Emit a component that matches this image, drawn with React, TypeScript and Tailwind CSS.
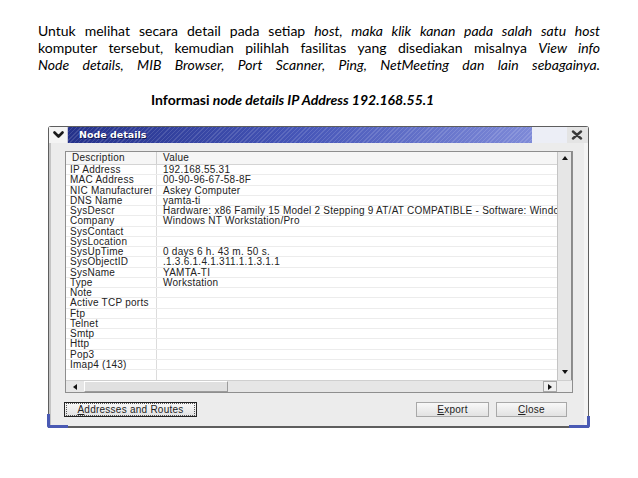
import React from "react";

const rows: [string, string][] = [
  ["IP Address", "192.168.55.31"],
  ["MAC Address", "00-90-96-67-58-8F"],
  ["NIC Manufacturer", "Askey Computer"],
  ["DNS Name", "yamta-ti"],
  ["SysDescr", "Hardware: x86 Family 15 Model 2 Stepping 9 AT/AT COMPATIBLE - Software: Windo"],
  ["Company", "Windows NT Workstation/Pro"],
  ["SysContact", ""],
  ["SysLocation", ""],
  ["SysUpTime", "0 days 6 h. 43 m. 50 s."],
  ["SysObjectID", ".1.3.6.1.4.1.311.1.1.3.1.1"],
  ["SysName", "YAMTA-TI"],
  ["Type", "Workstation"],
  ["Note", ""],
  ["Active TCP ports", ""],
  ["Ftp", ""],
  ["Telnet", ""],
  ["Smtp", ""],
  ["Http", ""],
  ["Pop3", ""],
  ["Imap4 (143)", ""],
];

function Btn({ w, first, rest, def }: { w: string; first: string; rest: string; def?: boolean }) {
  return (
    <div
      className={`${w} h-[15px] flex items-center justify-center bg-[linear-gradient(#f8f8f8,#e2e2e2)] ${
        def ? "border border-[#222]" : "border border-[#a8a8a8]"
      }`}
    >
      <div
        className={`flex items-center justify-center h-full w-full ${
          def ? "border border-dotted border-[#555] m-[1px]" : ""
        } text-[10px] tracking-[0.25px] leading-[10px] text-[#222]`}
      >
        <span className="underline">{first}</span>
        <span>{rest}</span>
      </div>
    </div>
  );
}

export default function App() {
  return (
    <div className="w-[638px] h-[478px] bg-white overflow-hidden relative">
      <div className="pt-[22px] pl-[38px] w-[600px] text-[14px] leading-[17px] text-black font-['Lato',sans-serif]">
        <div className="text-justify [text-align-last:justify] h-[17px]">
          Untuk melihat secara detail pada setiap <i>host, maka klik kanan pada salah satu host</i>
        </div>
        <div className="text-justify [text-align-last:justify] h-[17px]">
          komputer tersebut, kemudian pilihlah fasilitas yang disediakan misalnya <i>View info</i>
        </div>
        <div className="text-justify [text-align-last:justify] h-[17px]">
          <i>Node details, MIB Browser, Port Scanner, Ping, NetMeeting dan lain sebagainya.</i>
        </div>
      </div>
      <div className="mt-[18px] pl-[151px] h-[17px] text-[14px] leading-[17px] font-bold text-black font-['Lato',sans-serif]">
        Informasi <i>node details IP Address 192.168.55.1</i>
      </div>

      {/* Window */}
      <div className="mt-[18px] ml-[48px] w-[541px] h-[302px] border border-[#5e5e5e] border-b-2 rounded-t-[3px] bg-[#ececec] flex flex-col relative font-['Liberation_Sans',sans-serif]">
        {/* title bar */}
        <div className="h-[16px] flex shrink-0">
          <div className="w-[19px] h-full bg-[#f4f4f4] flex items-center justify-center border-r border-[#c8c8d8]">
            <svg width="11" height="8" viewBox="0 0 11 8">
              <polyline points="1.5,1.5 5.5,5.5 9.5,1.5" fill="none" stroke="#1a1a1a" strokeWidth="2.6" strokeLinecap="round" strokeLinejoin="round" />
            </svg>
          </div>
          <div className="w-[464px] h-full flex items-center pl-[11px] [background-image:repeating-linear-gradient(135deg,rgba(255,255,255,0.13)_0px,rgba(255,255,255,0.13)_1px,transparent_1px,transparent_3px),linear-gradient(to_right,#24318a,#4656b8_50%,#7e8ad8)]">
            <span className="text-white font-bold text-[9.5px] leading-[10px] font-['DejaVu_Sans',sans-serif] [text-shadow:1px_1px_0_#101850]">
              Node details
            </span>
          </div>
          <div className="w-[35px] h-full bg-[#eceef6]" />
          <div className="flex-1 h-full bg-[#e4e4e4] flex items-center justify-end pr-[5px]">
            <svg width="12" height="10" viewBox="0 0 12 10">
              <path d="M2 1.5 L10 8.5 M10 1.5 L2 8.5" stroke="#3a3a3a" strokeWidth="2.4" strokeLinecap="round" />
            </svg>
          </div>
        </div>

        {/* body */}
        <div className="flex-1 flex flex-col pl-[16px] pr-[15px] pt-[8px] border-l-[2px] border-r-[4px] border-l-[#c4c4c4] border-r-[#f4f4f4]">
          {/* listview */}
          <div className="w-[508px] h-[242px] -ml-[2px] border border-[#8e8e8e] bg-white flex flex-col">
            <div className="flex h-[228px]">
              <div className="w-[491px] flex flex-col overflow-hidden">
                <div className="h-[13px] shrink-0 flex bg-[#f6f6f6] border-b border-[#d4d4d4] text-[10px] tracking-[0.25px] leading-[12px] text-[#222]">
                  <div className="w-[91px] shrink-0 pl-[6px] border-r border-[#cfcfcf]">Description</div>
                  <div className="pl-[6px]">Value</div>
                </div>
                {rows.map(([d, v]) => (
                  <div key={d} className="h-[10.25px] shrink-0 flex border-b border-[#ececec] text-[10px] tracking-[0.25px] leading-[10px] text-[#222]">
                    <div className="w-[91px] shrink-0 pl-[4px] border-r border-[#dcdcdc] whitespace-nowrap">{d}</div>
                    <div className="flex-1 min-w-0 pl-[6px] whitespace-nowrap">{v}</div>
                  </div>
                ))}
                <div className="flex-1 flex">
                  <div className="w-[91px] border-r border-[#dcdcdc]" />
                </div>
              </div>
              {/* vertical scrollbar */}
              <div className="w-[15px] h-full bg-[#e6e6e6] border-l border-[#c4c4c4] border-r border-r-[#8a8a8a] flex flex-col justify-between">
                <div className="h-[12px] flex items-center justify-center">
                  <svg width="6" height="4" viewBox="0 0 6 4"><polygon points="0,4 3,0 6,4" fill="#111" /></svg>
                </div>
                <div className="h-[12px] flex items-center justify-center mb-[2px]">
                  <svg width="6" height="4" viewBox="0 0 6 4"><polygon points="0,0 6,0 3,4" fill="#111" /></svg>
                </div>
              </div>
            </div>
            {/* horizontal scrollbar */}
            <div className="h-[12px] flex bg-[#e6e6e6] border-t border-[#cfcfcf]">
              <div className="w-[18px] h-full flex items-center justify-center">
                <svg width="4" height="6" viewBox="0 0 4 6"><polygon points="4,0 0,3 4,6" fill="#111" /></svg>
              </div>
              <div className="w-[144px] h-full bg-[#e0e0e0] border border-[#9c9c9c] border-t-white border-l-white" />
              <div className="flex-1" />
              <div className="w-[14px] h-full flex items-center justify-center bg-[#efefef] border border-[#a8a8a8]">
                <svg width="4" height="6" viewBox="0 0 4 6"><polygon points="0,0 4,3 0,6" fill="#111" /></svg>
              </div>
              <div className="w-[15px] h-full bg-[#ececec]" />
            </div>
          </div>

          {/* buttons */}
          <div className="flex mt-[9px] -ml-[3px]">
            <Btn w="w-[133px]" first="A" rest="ddresses and Routes" def />
            <div className="flex-1" />
            <Btn w="w-[73px]" first="E" rest="xport" />
            <div className="w-[7px]" />
            <Btn w="w-[71px]" first="C" rest="lose" />
            <div className="w-[2px]" />
          </div>
        </div>

        {/* blue corner accents */}
        <div className="absolute left-[-2px] bottom-[-2px] w-[21px] h-[14px] border-l-[3px] border-b-[3px] border-[#4a5ab4] rounded-bl-[3px]" />
        <div className="absolute right-[-2px] bottom-[-2px] w-[21px] h-[12px] border-r-[3px] border-b-[3px] border-[#4a5ab4] rounded-br-[3px]" />
      </div>
    </div>
  );
}
